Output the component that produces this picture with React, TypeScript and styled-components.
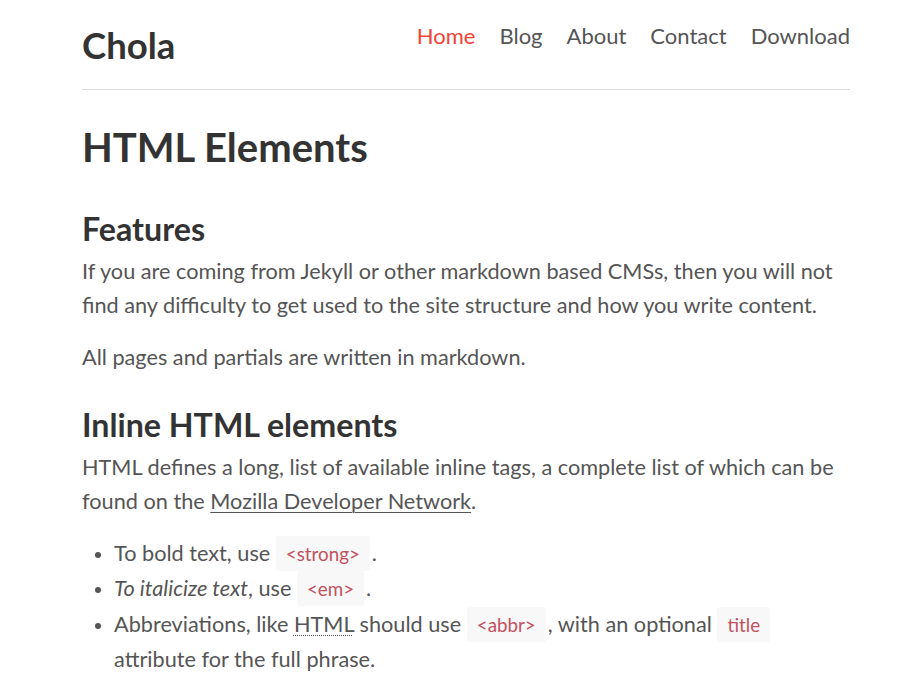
import React from "react";
import styled, { createGlobalStyle } from "styled-components";

const Global = createGlobalStyle`
  html, body { margin: 0; padding: 0; background: #fff; }
  body {
    font-family: Lato, "Open Sans", sans-serif;
    color: #555;
    -webkit-font-smoothing: antialiased;
  }
`;

const Page = styled.div`
  width: 768px;
  margin-left: 82px;
`;

const Header = styled.header`
  display: flex;
  justify-content: space-between;
  align-items: flex-start;
  height: 90px;
  border-bottom: 1px solid #ddd;
  box-sizing: border-box;
`;

const Logo = styled.a`
  font-size: 36.5px;
  font-weight: 700;
  color: #333;
  text-decoration: none;
  line-height: 1;
  margin-top: 27px;
`;

const Nav = styled.nav`
  display: flex;
  gap: 24px;
  margin-top: 22px;
`;

const NavLink = styled.a<{ $active?: boolean }>`
  font-size: 22px;
  line-height: 28px;
  color: ${(p) => (p.$active ? "#f44336" : "#555")};
  text-decoration: none;
`;

const Main = styled.main`
  padding-top: 30px;
`;

const Title = styled.h1`
  font-size: 40px;
  font-weight: 700;
  color: #333;
  line-height: 54px;
  margin: 0 0 35px;
`;

const Heading = styled.h2`
  font-size: 32.2px;
  font-weight: 700;
  color: #333;
  line-height: 40px;
  margin: 0 0 5px;
`;

const Para = styled.p`
  font-size: 21.7px;
  line-height: 34px;
  margin: 0 0 18px;
`;

const Section = styled.section`
  & + & {
    margin-top: 31px;
  }
`;

const Link = styled.a`
  color: #555;
  text-decoration: underline;
  text-underline-offset: 3px;
  text-decoration-thickness: 1px;
`;

const List = styled.ul`
  margin: 1px 0 0;
  padding-left: 32px;
  font-size: 21.7px;
  line-height: 35.4px;
  li::marker {
    font-size: 18px;
  }
`;

const Code = styled.code`
  font-family: Lato, sans-serif;
  font-size: 18.8px;
  line-height: 1;
  color: #c25160;
  background: #f8f8f8;
  border-radius: 3px;
  padding: 6px 10px;
  margin: 0 2px 0 0;
`;

const Abbr = styled.abbr`
  text-decoration: underline dotted;
  text-decoration-thickness: 1px;
  text-underline-offset: 3px;
`;

export default function App() {
  return (
    <>
      <Global />
      <Page>
        <Header>
          <Logo href="#">Chola</Logo>
          <Nav>
            <NavLink $active href="#">Home</NavLink>
            <NavLink href="#">Blog</NavLink>
            <NavLink href="#">About</NavLink>
            <NavLink href="#">Contact</NavLink>
            <NavLink href="#">Download</NavLink>
          </Nav>
        </Header>
        <Main>
          <Title>HTML Elements</Title>
          <Section>
            <Heading>Features</Heading>
            <Para>
              If you are coming from Jekyll or other markdown based CMSs, then you will not find any
              difficulty to get used to the site structure and how you write content.
            </Para>
            <Para>All pages and partials are written in markdown.</Para>
          </Section>
          <Section>
            <Heading>Inline HTML elements</Heading>
            <Para>
              HTML defines a long, list of available inline tags, a complete list of which can be
              found on the <Link href="#">Mozilla Developer Network</Link>.
            </Para>
            <List>
              <li>
                To bold text, use <Code>&lt;strong&gt;</Code>.
              </li>
              <li>
                <em>To italicize text</em>, use <Code>&lt;em&gt;</Code>.
              </li>
              <li>
                Abbreviations, like <Abbr title="HyperText Markup Language">HTML</Abbr> should use{" "}
                <Code>&lt;abbr&gt;</Code>, with an optional <Code>title</Code> attribute for the full
                phrase.
              </li>
            </List>
          </Section>
        </Main>
      </Page>
    </>
  );
}
